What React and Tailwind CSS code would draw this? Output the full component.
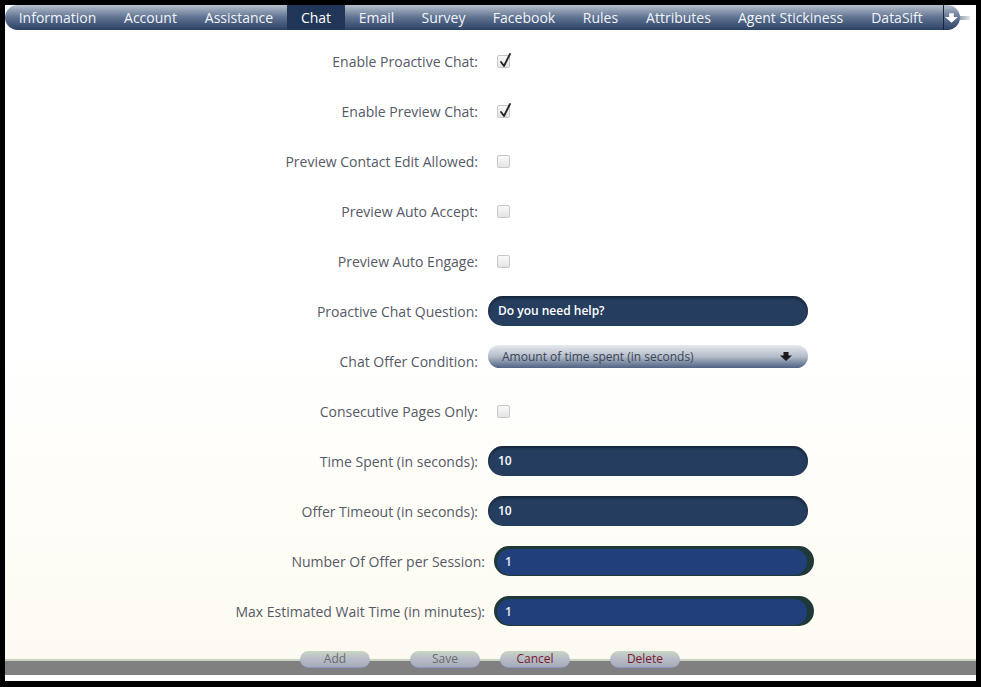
import React from 'react';

const tabs = [
  { name: 'Information', w: 'w-[105px]' },
  { name: 'Account', w: 'w-[81px]' },
  { name: 'Assistance', w: 'w-[96px]' },
  { name: 'Chat', w: 'w-[58px]', active: true },
  { name: 'Email', w: 'w-[63px]' },
  { name: 'Survey', w: 'w-[71px]' },
  { name: 'Facebook', w: 'w-[90px]' },
  { name: 'Rules', w: 'w-[63px]' },
  { name: 'Attributes', w: 'w-[93px]' },
  { name: 'Agent Stickiness', w: 'w-[131px]' },
  { name: 'DataSift', w: 'w-[82px]' },
];

const rows = [
  { label: 'Enable Proactive Chat:', type: 'check', checked: true },
  { label: 'Enable Preview Chat:', type: 'check', checked: true },
  { label: 'Preview Contact Edit Allowed:', type: 'check' },
  { label: 'Preview Auto Accept:', type: 'check' },
  { label: 'Preview Auto Engage:', type: 'check' },
  { label: 'Proactive Chat Question:', type: 'text', value: 'Do you need help?' },
  { label: 'Chat Offer Condition:', type: 'select', value: 'Amount of time spent (in seconds)' },
  { label: 'Consecutive Pages Only:', type: 'check' },
  { label: 'Time Spent (in seconds):', type: 'text', value: '10' },
  { label: 'Offer Timeout (in seconds):', type: 'text', value: '10' },
  { label: 'Number Of Offer per Session:', type: 'number', value: '1' },
  { label: 'Max Estimated Wait Time (in minutes):', type: 'number', value: '1' },
];

const buttons = [
  { name: 'Add', cls: 'ml-[295px] text-[#6b6b6b]' },
  { name: 'Save', cls: 'ml-[40px] text-[#6b6b6b]' },
  { name: 'Cancel', cls: 'ml-[20px] text-[#7a1b2c]' },
  { name: 'Delete', cls: 'ml-[40px] text-[#7a1b2c]' },
];

const Check = ({ checked }) => (
  <div className="ml-[19px] w-[13px] h-[13px] rounded-[2px] border border-[#c8c8c8] bg-gradient-to-b from-[#fafafa] to-[#e4e4e4] relative">
    {checked && (
      <svg className="absolute left-[1px] top-[-3px]" width="13" height="15" viewBox="0 0 13 15">
        <path d="M2 9 L5 13 L11 1" fill="none" stroke="#222" strokeWidth="1.8" strokeLinecap="round" strokeLinejoin="round" />
      </svg>
    )}
  </div>
);

const Field = ({ row }) => {
  if (row.type === 'check') return <Check checked={row.checked} />;
  if (row.type === 'text')
    return (
      <div className="ml-[10px] w-[320px] h-[30px] rounded-full bg-[#253e5f] shadow-[inset_0_2px_3px_rgba(0,0,0,0.45)] flex items-center pl-[10px] text-[12px] font-semibold text-white">
        {row.value}
      </div>
    );
  if (row.type === 'select')
    return (
      <div className="ml-[10px] mb-[9px] w-[320px] h-[23px] rounded-full bg-gradient-to-b from-[#e6e9ee] via-[#b4bdca] to-[#4f6382] flex items-center justify-between pl-[14px] pr-[16px] text-[12px] text-[#3b4456]">
        <span>{row.value}</span>
        <svg width="12" height="9" viewBox="0 0 12 9">
          <path d="M3.5 0 H8.5 V3.5 H12 L6 9 L0 3.5 H3.5 Z" fill="#1a1a1a" />
        </svg>
      </div>
    );
  return (
    <div className="ml-[9px] w-[320px] h-[30px] rounded-full bg-[#1f3838] pt-[3px] pl-[3px] pr-[7px] pb-[1px]">
      <div className="h-full rounded-full bg-[#213f7a] flex items-center pl-[8px] text-[12px] font-semibold text-[#e8ecf5]">
        {row.value}
      </div>
    </div>
  );
};

export default function App() {
  return (
    <div className="w-[981px] h-[687px] bg-black p-[5px] pb-[6px] font-['Open_Sans',sans-serif]">
      <div className="w-full h-full bg-white flex flex-col">
        <div className="flex items-center h-[25px] shrink-0 pr-[6px]">
          <div className="flex-1 h-full rounded-full bg-gradient-to-b from-[#b7c0cc] via-[#5f7291] to-[#2c4265] flex items-stretch overflow-hidden">
            {tabs.map((t) => (
              <div
                key={t.name}
                className={`${t.w} shrink-0 flex items-center justify-center text-[14px] ${
                  t.active ? 'bg-[#1f3659] text-white' : 'text-[#f2f4f8]'
                }`}
              >
                {t.name}
              </div>
            ))}
            <div className="w-[1px] shrink-0 bg-[#1a2537] ml-[5px]" />
            <div className="flex-1 flex items-center justify-center pr-[2px]">
              <svg width="13" height="10" viewBox="0 0 14 10">
                <path d="M4.5 0 H9.5 V4 H14 L7 10 L0 4 H4.5 Z" fill="#ffffff" />
              </svg>
            </div>
          </div>
          <div className="w-[10px] h-[4px] shrink-0 bg-gradient-to-r from-[#9aa3b0] to-[#e6e8ec]" />
        </div>

        <div className="flex-1 flex flex-col pt-[6px] bg-gradient-to-b from-white via-white to-[#fdfbf1]">
          {rows.map((r, i) => (
            <div key={i} className="h-[50px] flex items-center">
              <div
                className={`text-right text-[14px] text-[#555a66] ${
                  r.type === 'number' ? 'w-[480px]' : 'w-[473px]'
                }`}
              >
                {r.label}
              </div>
              <Field row={r} />
            </div>
          ))}
        </div>

        <div className="h-[32px] shrink-0 relative bg-white">
          <div className="absolute left-0 right-0 top-0 h-[10px] bg-[#fdfbf1]" />
          <div className="absolute left-0 right-0 top-[10px] h-[2px] bg-[#c9d3c2]" />
          <div className="absolute left-0 right-0 top-[12px] h-[14px] bg-[#808080]" />
          <div className="relative flex pt-[2px]">
            {buttons.map((b) => (
              <div
                key={b.name}
                className={`w-[70px] h-[17px] rounded-full bg-gradient-to-b from-[#c9d6c4] via-[#b7bcc8] to-[#a6abb8] border-b border-[#8e93c0] flex items-center justify-center text-[12px] ${b.cls}`}
              >
                {b.name}
              </div>
            ))}
          </div>
        </div>
      </div>
    </div>
  );
}
